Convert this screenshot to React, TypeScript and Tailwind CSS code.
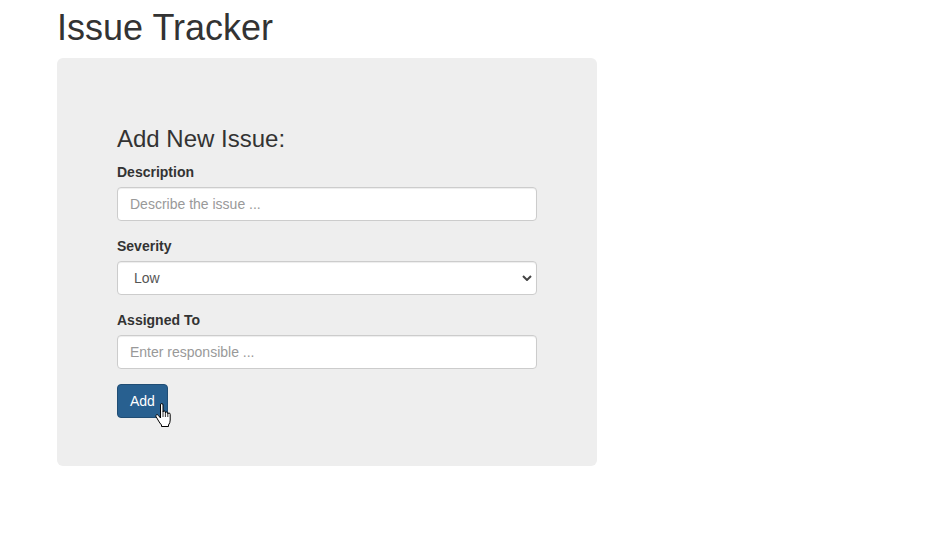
import { useState } from "react";

function HandCursor() {
  return (
    <svg
      width="18"
      height="25"
      viewBox="0 0 18 25"
      className="absolute left-[38px] top-[19px] pointer-events-none"
      aria-hidden="true"
    >
      <path
        d="M5.5 2 Q5.5 0.5 6.8 0.5 Q8 0.5 8 2 V9 Q8 8 9.2 8 Q10.4 8 10.4 9.2 V10 Q10.4 9 11.6 9 Q12.8 9 12.8 10.2 V11 Q12.8 10 14 10 Q15.2 10 15.2 11.4 V17 Q15.2 20 13.5 22 V23.5 H6.5 V22 Q5 20.5 3 17 L1 13.5 Q0.5 12.3 1.6 11.8 Q2.6 11.4 3.5 12.6 L5.5 15 Z"
        fill="#fff"
        stroke="#000"
        strokeWidth="1"
        strokeLinejoin="round"
      />
      <path d="M10.4 10 V14 M12.8 11 V14 M8 9 V14" stroke="#000" strokeWidth="0.8" />
    </svg>
  );
}

const inputCls =
  "block w-full h-[34px] px-3 py-1.5 text-sm text-[#555] bg-white border border-[#ccc] rounded shadow-[inset_0_1px_1px_rgba(0,0,0,0.075)] placeholder:text-[#999] outline-none";

export default function App() {
  const [severity, setSeverity] = useState("Low");

  return (
    <div className="min-h-screen bg-white text-[#333] text-sm leading-5 font-['Liberation_Sans',Arial,sans-serif]">
      <div className="ml-[57px] w-[540px]">
        <h1 className="pt-2 mb-2.5 text-[36px] leading-[1.1] font-normal">Issue Tracker</h1>

        <div className="bg-[#eee] rounded-md px-[60px] pt-12 pb-12">
          <form onSubmit={(e) => e.preventDefault()}>
            <h3 className="mt-5 mb-2.5 text-2xl leading-[1.1] font-normal">Add New Issue:</h3>

            <div className="mb-[15px]">
              <label className="inline-block mb-[5px] font-bold">Description</label>
              <input type="text" className={inputCls} placeholder="Describe the issue ..." />
            </div>

            <div className="mb-[15px]">
              <label className="inline-block mb-[5px] font-bold">Severity</label>
              <div className="relative">
                <select
                  value={severity}
                  onChange={(e) => setSeverity(e.target.value)}
                  className={inputCls + " appearance-none pl-4"}
                >
                  <option value="Low">Low</option>
                  <option value="Medium">Medium</option>
                  <option value="High">High</option>
                </select>
                <svg
                  width="10"
                  height="6"
                  viewBox="0 0 10 6"
                  className="absolute right-[5px] top-[14px] pointer-events-none"
                  aria-hidden="true"
                >
                  <path d="M1 1 L5 5 L9 1" fill="none" stroke="#444" strokeWidth="2" />
                </svg>
              </div>
            </div>

            <div className="mb-[15px]">
              <label className="inline-block mb-[5px] font-bold">Assigned To</label>
              <input type="text" className={inputCls} placeholder="Enter responsible ..." />
            </div>

            <div className="relative inline-block">
              <button
                type="submit"
                className="h-[34px] px-3 py-1.5 text-sm text-white bg-[#286090] border border-[#204d74] rounded"
              >
                Add
              </button>
              <HandCursor />
            </div>
          </form>
        </div>
      </div>
    </div>
  );
}
